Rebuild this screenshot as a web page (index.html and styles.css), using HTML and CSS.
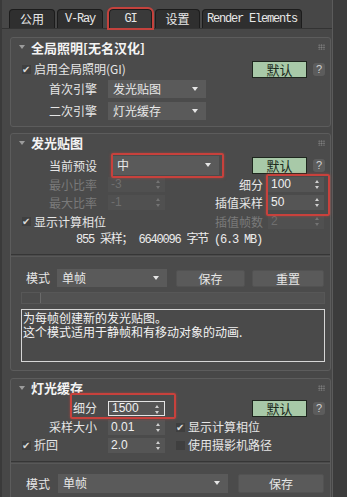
FILE: index.html
```html
<!DOCTYPE html>
<html lang="zh-CN">
<head>
    <meta charset="UTF-8">
    <title>GI</title>
    <link rel="stylesheet" href="styles.css">
</head>
<body>
    <div class="frame">
        <div class="main">
            <div class="tabs">
                <div class="tab t1">公用</div>
                <div class="tab t2 lat">V-Ray</div>
                <div class="tab t3 lat active">GI</div>
                <div class="tab t4">设置</div>
                <div class="tab t5 lat">Render Elements</div>
            </div>

            <!-- global illumination -->
            <section class="panel p1">
                <div class="head"><span class="tri"></span>全局照明[无名汉化]<span class="grip"></span></div>
                <div class="row r-enable">
                    <span class="check on"></span><span class="ctext">启用全局照明(GI)</span>
                    <div class="btns"><button class="def">默认</button><button class="q">?</button></div>
                </div>
                <div class="row r-eng1">
                    <span class="lbl">首次引擎</span>
                    <div class="drop w-eng">发光贴图<span class="arrow"></span></div>
                </div>
                <div class="row r-eng2">
                    <span class="lbl">二次引擎</span>
                    <div class="drop w-eng">灯光缓存<span class="arrow"></span></div>
                </div>
            </section>

            <!-- irradiance map -->
            <section class="panel p2">
                <div class="head"><span class="tri"></span>发光贴图<span class="grip"></span></div>
                <div class="row r-preset">
                    <span class="lbl">当前预设</span>
                    <div class="drop w-preset">中<span class="arrow"></span></div>
                    <div class="btns"><button class="def">默认</button><button class="q">?</button></div>
                </div>
                <div class="row r-spin">
                    <div class="left">
                        <span class="lbl off">最小比率</span>
                        <div class="spin off">-3<span class="ud"></span></div>
                    </div>
                    <span class="lbl2">细分</span>
                    <div class="spin w-rs">100<span class="ud"></span></div>
                </div>
                <div class="row r-spin">
                    <div class="left">
                        <span class="lbl off">最大比率</span>
                        <div class="spin off">-1<span class="ud"></span></div>
                    </div>
                    <span class="lbl2">插值采样</span>
                    <div class="spin w-rs">50<span class="ud"></span></div>
                </div>
                <div class="row r-spin r-phase">
                    <div class="left">
                        <span class="check on"></span><span class="ctext">显示计算相位</span>
                    </div>
                    <span class="lbl2 off">插值帧数</span>
                    <div class="spin w-rs off">2<span class="ud"></span></div>
                </div>
                <div class="info">855 采样； 6640096 字节 (6.3 MB)</div>
                <div class="sep"></div>
                <div class="row r-mode">
                    <span class="mlbl">模式</span>
                    <div class="drop w-mode">单帧<span class="arrow"></span></div>
                    <button class="btn b-save">保存</button>
                    <button class="btn b-reset">重置</button>
                </div>
                <div class="track"><span class="knob"></span></div>
                <div class="note">
                    <div class="line">为每帧创建新的发光贴图。</div>
                    <div class="line">这个模式适用于静帧和有移动对象的动画.</div>
                </div>
                <div class="mark mark-preset"></div>
                <div class="mark mark-sub"></div>
            </section>

            <!-- light cache -->
            <section class="panel p3">
                <div class="head"><span class="tri"></span>灯光缓存<span class="grip"></span></div>
                <div class="row r-lc">
                    <span class="lbl">细分</span>
                    <div class="spin focus">1500<span class="ud"></span></div>
                    <div class="btns"><button class="def">默认</button><button class="q">?</button></div>
                </div>
                <div class="row r-lc2">
                    <span class="lbl">采样大小</span>
                    <div class="spin">0.01<span class="ud"></span></div>
                    <span class="check on c-right"></span><span class="ctext">显示计算相位</span>
                </div>
                <div class="row r-lc3">
                    <div class="lbl lbl-check"><span class="check on"></span><span class="ctext">折回</span></div>
                    <div class="spin">2.0<span class="ud"></span></div>
                    <span class="check c-right"></span><span class="ctext">使用摄影机路径</span>
                </div>
                <div class="sep sep3"></div>
                <div class="row r-mode2">
                    <span class="mlbl">模式</span>
                    <div class="drop w-mode2">单帧<span class="arrow"></span></div>
                    <button class="btn b-save2">保存</button>
                </div>
                <div class="mark mark-lc"></div>
            </section>
        </div>
        <div class="side"></div>
    </div>
</body>
</html>
```

FILE: styles.css
```css
body {
    margin: 0;
    background-color: #474747;
    font-family: "Noto Sans CJK SC", "Liberation Sans", sans-serif;
    font-size: 12px;
    color: #e6e6e6;
    overflow: hidden;
}
.frame {
    display: flex;
    width: 347px;
    height: 497px;
}
.main {
    width: 332px;
    padding-top: 9px;
    border-left: 2px solid #3a3a3a;
    box-sizing: border-box;
}
.side {
    flex: 1;
    background-color: #3c3c3c;
    border-left: 1px solid #5b5b5b;
}

/* tabs */
.tabs {
    display: flex;
    height: 19px;
    padding-left: 7px;
    border-bottom: 1px solid #333;
}
.tab {
    height: 19px;
    line-height: 18px;
    text-align: center;
    background-color: #2f2f2f;
    border: 1px solid #1c1c1c;
    border-bottom: none;
    border-radius: 4px 4px 0 0;
    color: #e8e8e8;
    box-sizing: border-box;
}
.tab.lat {
    font-family: "Liberation Mono", monospace;
    letter-spacing: -1.2px;
}
.t1 { width: 46px; margin-right: 2px; }
.t2 { width: 46px; margin-right: 6px; }
.t3 { width: 43px; margin-right: 3px; }
.t4 { width: 45px; margin-right: 2px; }
.t5 { width: 100px; }
.tab.active {
    background-color: #3a3a3a;
    outline: 2px solid #c4423d;
    box-shadow: 0 0 3px rgba(220, 70, 60, 0.6);
}

/* rollout panels */
.panel {
    position: relative;
    width: 321px;
    margin-left: 8px;
    background-color: #4b4b4b;
    border: 1px solid #5c5c5c;
    border-radius: 3px;
    box-sizing: border-box;
}
.p1 { margin-top: 8px; height: 90px; }
.p2 { margin-top: 6px; height: 238px; }
.p3 { margin-top: 7px; height: 130px; }
.head {
    display: flex;
    align-items: center;
    height: 17px;
    padding-left: 8px;
    font-size: 13px;
    font-weight: bold;
    color: #f4f4f4;
    line-height: 17px;
}
.p1 .head { height: 18px; }
.tri {
    width: 0;
    height: 0;
    border-left: 3px solid transparent;
    border-right: 3px solid transparent;
    border-top: 4px solid #9c9c9c;
    margin-right: 6px;
}
.grip {
    width: 7px;
    height: 6px;
    margin-left: auto;
    margin-right: 5px;
    background-image: radial-gradient(circle, #858585 0.7px, transparent 0.9px);
    background-size: 2.4px 2.4px;
}

.row {
    display: flex;
    align-items: center;
    height: 18px;
    line-height: 18px;
}
.lbl {
    width: 92px;
    padding-right: 6px;
    text-align: right;
    box-sizing: border-box;
    flex-shrink: 0;
}
.lbl2 {
    width: 102px;
    padding-right: 5px;
    text-align: right;
    box-sizing: border-box;
}
.off { color: #7a7a7a; }

.check {
    display: inline-block;
    position: relative;
    width: 9px;
    height: 9px;
    background-color: #3f3f3f;
    flex-shrink: 0;
}
.check.on::after {
    content: "✔";
    position: absolute;
    left: 0;
    top: -5px;
    font-size: 10px;
    color: #d8d8d8;
}
.ctext { margin-left: 3px; }

.r-enable { margin-top: 4px; padding-left: 11px; }
.r-eng1 { margin-top: 2px; }
.r-eng2 { margin-top: 4px; }

.btns {
    display: flex;
    align-items: center;
    margin-left: auto;
    margin-right: 5px;
}
button {
    font-family: "Noto Sans CJK SC", sans-serif;
    font-size: 12px;
    padding: 0;
    cursor: pointer;
}
.def {
    width: 55px;
    height: 17px;
    line-height: 15px;
    background-color: #a8c9a8;
    border: 1px solid #1e261e;
    color: #1b2a1b;
    font-size: 13px;
}
.q {
    width: 12px;
    height: 13px;
    line-height: 13px;
    margin-left: 6px;
    background-color: #5c5c5c;
    border: none;
    border-radius: 3px;
    color: #cfcfcf;
    font-family: "Liberation Sans", sans-serif;
    font-size: 11px;
}

.drop {
    position: relative;
    height: 18px;
    line-height: 18px;
    padding-left: 5px;
    background-color: #5a5a5a;
    box-sizing: border-box;
    color: #e8e8e8;
    margin-left: 5px;
}
.arrow {
    position: absolute;
    right: 8px;
    top: 7px;
    border-left: 3px solid transparent;
    border-right: 3px solid transparent;
    border-top: 4px solid #e6e6e6;
}
.w-eng { width: 98px; }
.w-preset { width: 107px; margin-left: 9px; height: 19px; }
.w-mode { width: 110px; margin-left: 7px; }
.w-mode2 { width: 170px; margin-left: 8px; height: 19px; }

.spin {
    position: relative;
    width: 57px;
    height: 15px;
    line-height: 15px;
    padding-left: 3px;
    background-color: #555;
    box-sizing: border-box;
    font-family: "Liberation Sans", sans-serif;
    font-size: 12px;
    color: #f0f0f0;
    margin-left: 5px;
}
.spin.off { color: #6f6f6f; background-color: #505050; }
.spin.focus { border: 1px solid #e4e4e4; line-height: 13px; }
.ud {
    position: absolute;
    right: 4px;
    top: 3px;
    width: 5px;
    height: 9px;
}
.ud::before, .ud::after {
    content: "";
    position: absolute;
    left: 0;
    border-left: 2.5px solid transparent;
    border-right: 2.5px solid transparent;
}
.ud::before { top: 0; border-bottom: 3px solid #d0d0d0; }
.ud::after { bottom: 0; border-top: 3px solid #d0d0d0; }
.off .ud::before { border-bottom-color: #747474; }
.off .ud::after { border-top-color: #747474; }
.w-rs { width: 56px; margin-left: 0; }

.r-preset { margin-top: 5px; height: 19px; }
.r-spin { height: 17px; margin-top: 1px; }
.r-spin:first-of-type { margin-top: 4px; }
.left {
    display: flex;
    align-items: center;
    width: 155px;
}
.r-phase { margin-top: 2px; }
.r-phase .left { padding-left: 11px; box-sizing: border-box; }

.info {
    height: 16px;
    line-height: 16px;
    margin-top: 2px;
    padding-left: 65px;
    font-family: "Liberation Mono", "Noto Sans CJK SC", monospace;
    letter-spacing: -1.2px;
    color: #ececec;
}
.sep {
    margin-top: 6px;
    height: 1px;
    border-top: 1px solid #363636;
    border-bottom: 1px solid #585858;
}
.r-mode { margin-top: 12px; }
.mlbl { padding-left: 15px; width: 24px; }
.btn {
    height: 17px;
    line-height: 15px;
    background-color: #5a5a5a;
    border: 1px solid #525252;
    border-radius: 2px;
    color: #e6e6e6;
}
.b-save { width: 69px; margin-left: 9px; }
.b-reset { width: 72px; margin-left: 7px; }
.b-save2 { width: 86px; margin-left: 10px; height: 19px; }

.track {
    display: flex;
    height: 12px;
    margin: 5px 5px 0 10px;
    background-color: #525252;
    border: 1px solid #575757;
    box-sizing: border-box;
}
.knob {
    width: 18px;
    border-right: 1px solid #6a6a6a;
    background-color: #4c4c4c;
}
.note {
    height: 53px;
    margin: 5px 5px 0 10px;
    padding: 1px 1px;
    border: 1px solid #d6d6d6;
    box-sizing: border-box;
    color: #f2f2f2;
    background-color: #4a4a4a;
}
.line {
    height: 14px;
    line-height: 14px;
    white-space: nowrap;
}

.r-lc { margin-top: 3px; }
.r-lc2 { margin-top: 1px; }
.c-right { margin-left: 11px; }
.lbl-check {
    display: flex;
    align-items: center;
    padding-left: 11px;
    text-align: left;
}
.sep3 { margin-top: 7px; }
.r-mode2 { margin-top: 10px; height: 19px; }

/* red annotation boxes drawn over the screenshot */
.mark {
    position: absolute;
    border: 2px solid #c8413c;
    border-radius: 2px;
    box-shadow: 0 0 3px rgba(220, 70, 60, 0.5);
    box-sizing: border-box;
}
.mark-preset { left: 100px; top: 19px; width: 113px; height: 25px; }
.mark-sub { left: 255px; top: 40px; width: 64px; height: 42px; }
.mark-lc { left: 59px; top: 14px; width: 106px; height: 26px; }
```
